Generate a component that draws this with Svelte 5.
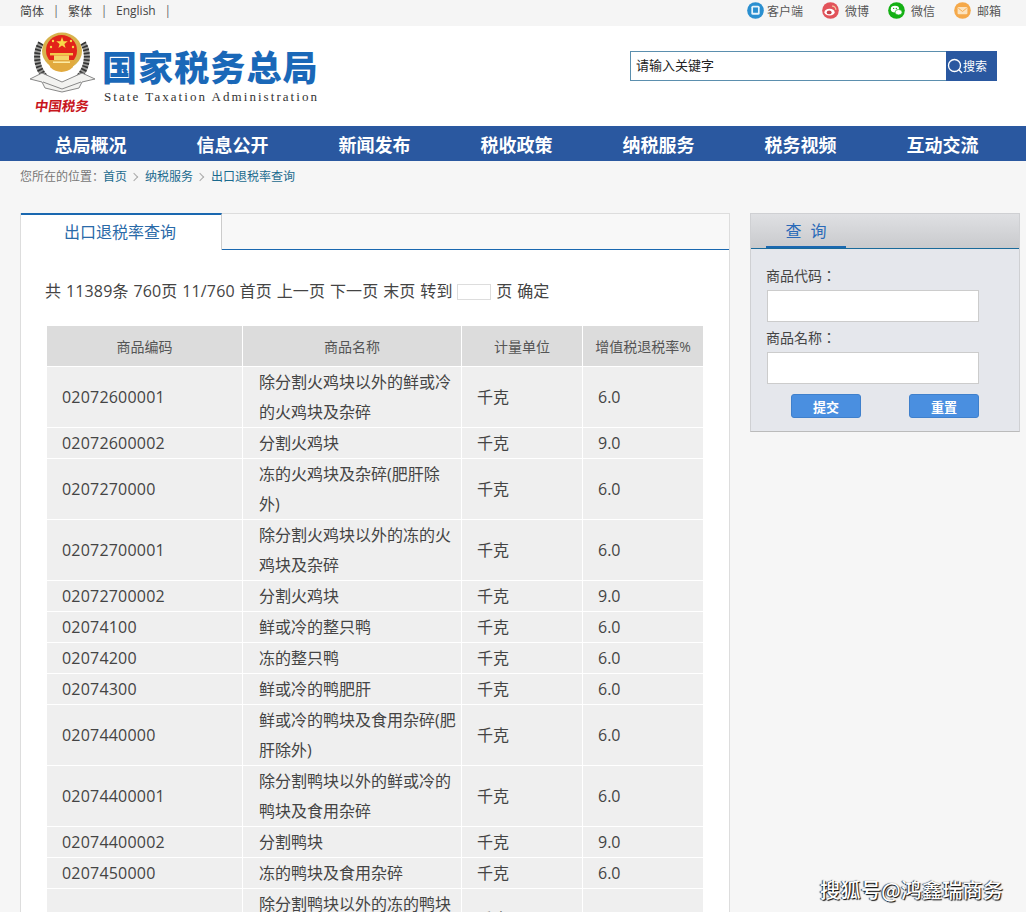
<script>
  const cols = ['商品编码', '商品名称', '计量单位', '增值税退税率%'];
  const rows = [
    ['02072600001', '除分割火鸡块以外的鲜或冷的火鸡块及杂碎', '6.0'],
    ['02072600002', '分割火鸡块', '9.0'],
    ['0207270000', '冻的火鸡块及杂碎(肥肝除外)', '6.0'],
    ['02072700001', '除分割火鸡块以外的冻的火鸡块及杂碎', '6.0'],
    ['02072700002', '分割火鸡块', '9.0'],
    ['02074100', '鲜或冷的整只鸭', '6.0'],
    ['02074200', '冻的整只鸭', '6.0'],
    ['02074300', '鲜或冷的鸭肥肝', '6.0'],
    ['0207440000', '鲜或冷的鸭块及食用杂碎(肥肝除外)', '6.0'],
    ['02074400001', '除分割鸭块以外的鲜或冷的鸭块及食用杂碎', '6.0'],
    ['02074400002', '分割鸭块', '9.0'],
    ['0207450000', '冻的鸭块及食用杂碎', '6.0'],
    ['02074500001', '除分割鸭块以外的冻的鸭块及食用杂碎', '6.0']
  ];
  const nav = ['总局概况', '信息公开', '新闻发布', '税收政策', '纳税服务', '税务视频', '互动交流'];
</script>

<div class="page">
  <div class="topbar">
    <div class="langs">
      <span>简体</span><i>|</i><span>繁体</span><i>|</i><span>English</span><i>|</i>
    </div>
    <div class="links">
      <span class="link first">
        <svg viewBox="0 0 18 18" width="17" height="17"><circle cx="9" cy="9" r="8.8" fill="#2a8fd0"/><rect x="4.6" y="4" width="8.8" height="9.6" rx="1.6" fill="#e8f4fb"/><rect x="6.4" y="5.8" width="5.2" height="5.6" fill="#2a8fd0"/></svg>
        客户端
      </span>
      <span class="link">
        <svg viewBox="0 0 18 18" width="17" height="17"><circle cx="9" cy="9" r="8.8" fill="#e2535a"/><ellipse cx="8" cy="10.8" rx="5.4" ry="3.6" fill="#fff"/><ellipse cx="7.6" cy="11" rx="2.6" ry="2" fill="#c9424a"/><path d="M10.6 4.4a3.6 3.6 0 0 1 4 4" fill="none" stroke="#f7c9a0" stroke-width="1.3"/></svg>
        微博
      </span>
      <span class="link">
        <svg viewBox="0 0 18 18" width="17" height="17"><circle cx="9" cy="9" r="8.8" fill="#14b014"/><ellipse cx="7.4" cy="7.6" rx="4.4" ry="3.5" fill="#fff"/><ellipse cx="11.2" cy="10.8" rx="3.7" ry="2.9" fill="#fff" stroke="#14b014" stroke-width=".7"/><circle cx="6" cy="6.8" r=".7" fill="#14b014"/><circle cx="8.8" cy="6.8" r=".7" fill="#14b014"/></svg>
        微信
      </span>
      <span class="link">
        <svg viewBox="0 0 18 18" width="17" height="17"><circle cx="9" cy="9" r="8.8" fill="#f5a94a"/><rect x="3.8" y="5.4" width="10.4" height="7.6" rx="1.2" fill="#fbe3bf"/><path d="M4.6 6.6 9 10l4.4-3.4" fill="none" stroke="#f5a94a" stroke-width="1"/></svg>
        邮箱
      </span>
    </div>
  </div>

  <header class="header">
    <div class="logo">
      <div class="emblem">
        <svg viewBox="0 0 66 62" width="66" height="62">
          <path d="M12 11C5 22 7 40 22 50" fill="none" stroke="#9a9a98" stroke-width="6"/>
          <path d="M54 11C61 22 59 40 44 50" fill="none" stroke="#9a9a98" stroke-width="6"/>
          <path d="M12 11C5 22 7 40 22 50" fill="none" stroke="#333" stroke-width="6" stroke-dasharray="1.6 1.8"/>
          <path d="M54 11C61 22 59 40 44 50" fill="none" stroke="#333" stroke-width="6" stroke-dasharray="1.6 1.8"/>
          <path d="M1 47 13 41 33 50 53 41 66 47 53 50 50 56 33 60 16 56 13 50Z" fill="#f2f2f0" stroke="#888" stroke-width="1"/>
          <path d="M14 50 33 57 52 50" fill="none" stroke="#888" stroke-width="1"/>
          <ellipse cx="33" cy="19" rx="20" ry="18.5" fill="#d8b24c"/>
          <circle cx="32.5" cy="18.5" r="15.5" fill="#e2231a"/>
          <path d="M18 28h29l-3.5 7.5a16 16 0 0 1-22 0Z" fill="#e2aa3e"/>
          <rect x="21" y="21" width="23" height="2.4" fill="#f2c84a"/>
          <rect x="25" y="23.4" width="15" height="4.6" fill="#f4d468"/>
          <rect x="24" y="29.5" width="17" height="1.4" fill="#fff2b0"/>
          <polygon points="33,5 34.5,9.2 38.8,9.2 35.4,11.9 36.6,16 33,13.6 29.4,16 30.6,11.9 27.2,9.2 31.5,9.2" fill="#f8d848"/>
          <circle cx="24" cy="9" r="1.2" fill="#f8d848"/><circle cx="42" cy="9" r="1.2" fill="#f8d848"/>
          <circle cx="22" cy="15" r="1.2" fill="#f8d848"/><circle cx="44" cy="15" r="1.2" fill="#f8d848"/>
        </svg>
        <span class="seal">中国税务</span>
      </div>
      <div class="brand">
        <div class="brand-cn">国家税务总局</div>
        <div class="brand-en">State Taxation Administration</div>
      </div>
    </div>
    <div class="search">
      <div class="search-input">请输入关键字</div>
      <div class="search-btn">
        <svg viewBox="0 0 16 16" width="16" height="16"><circle cx="7.5" cy="7.5" r="6" fill="none" stroke="#fff" stroke-width="1.3"/><path d="M11.8 11.8 15 15" stroke="#fff" stroke-width="1.3"/></svg>
        <span>搜索</span>
      </div>
    </div>
  </header>

  <nav class="nav">
    {#each nav as n}<a href="#top">{n}</a>{/each}
  </nav>

  <div class="crumbs">
    <span class="here">您所在的位置：</span><b>首页</b><em></em><b>纳税服务</b><em></em><b>出口退税率查询</b>
  </div>

  <div class="content">
    <main class="panel">
      <div class="tabs">
        <div class="tab">出口退税率查询</div>
        <div class="tab-rest"></div>
      </div>
      <div class="pager">
        共 11389条 760页 11/760 首页 上一页 下一页 末页 转到 <span class="jump"></span> 页 确定
      </div>
      <table>
        <thead>
          <tr>{#each cols as c}<th>{c}</th>{/each}</tr>
        </thead>
        <tbody>
          {#each rows as r}
            <tr>
              <td>{r[0]}</td>
              <td>{r[1]}</td>
              <td>千克</td>
              <td>{r[2]}</td>
            </tr>
          {/each}
        </tbody>
      </table>
    </main>

    <aside class="side">
      <div class="side-head"><span>查 询</span></div>
      <div class="side-body">
        <div class="lbl">商品代码：</div>
        <div class="field"></div>
        <div class="lbl second">商品名称：</div>
        <div class="field"></div>
        <div class="btns">
          <button>提交</button>
          <button>重置</button>
        </div>
      </div>
    </aside>
  </div>

  <div class="mark">搜狐号@鸿鑫瑞商务</div>
</div>

<style>
  :global(html), :global(body) { margin: 0; overflow: hidden; }
  .page {
    position: relative;
    width: 1026px;
    height: 912px;
    overflow: hidden;
    background: #f6f6f6;
    color: #444;
    font-family: "Open Sans", "Noto Sans CJK SC", sans-serif;
  }
  .topbar {
    height: 26px;
    display: flex;
    justify-content: space-between;
    align-items: center;
    padding: 0 25px 5px 20px;
    box-sizing: border-box;
    background: #f5f5f5;
    font-size: 12px;
    color: #444;
  }
  .langs { display: flex; align-items: center; }
  .langs i { font-style: normal; width: 24px; text-align: center; color: #666; }
  .links { display: flex; align-items: center; gap: 19px; }
  .link { display: flex; align-items: center; gap: 6px; color: #555; }
  .link.first { gap: 3px; }
  .header {
    height: 100px;
    background: #fff;
    display: flex;
    justify-content: space-between;
    padding: 0 29px 0 29px;
  }
  .logo { display: flex; }
  .emblem { width: 66px; display: flex; flex-direction: column; align-items: center; padding-top: 6px; }
  .seal {
    font-family: "Noto Sans CJK SC", sans-serif;
    font-size: 13.5px;
    line-height: 20px;
    margin-top: 1px;
    font-weight: 700;
    color: #c8161d;
    white-space: nowrap;
    transform: skewX(-8deg);
  }
  .brand { margin-left: 8px; padding-top: 18px; }
  .brand-cn {
    font-family: "Noto Sans CJK SC", sans-serif;
    font-size: 35px;
    font-weight: 900;
    line-height: 44px;
    margin-left: -1px;
    color: #1a68b8;
    letter-spacing: 1.1px;
    white-space: nowrap;
  }
  .brand-en {
    font-family: "Liberation Serif", serif;
    font-size: 13px;
    line-height: 16px;
    letter-spacing: 2.05px;
    color: #333;
    margin: 1px 0 0 1px;
    white-space: nowrap;
  }
  .search { display: flex; height: 30px; margin-top: 25px; width: 367px; }
  .search-input {
    flex: 1;
    box-sizing: border-box;
    border: 1px solid #5b8fae;
    border-right: none;
    background: #fff;
    font-size: 13px;
    line-height: 26px;
    padding-left: 5px;
    color: #222;
  }
  .search-btn {
    width: 51px;
    background: #2a58a0;
    color: #fff;
    font-size: 12px;
    display: flex;
    align-items: center;
    padding-left: 1px;
    box-sizing: border-box;
  }
  .nav {
    height: 35px;
    background: #2a58a0;
    display: flex;
    padding-left: 19.5px;
  }
  .nav a {
    width: 142px;
    flex: none;
    text-align: center;
    color: #fff;
    font-family: "Noto Sans CJK SC", sans-serif;
    font-size: 18px;
    font-weight: 700;
    line-height: 37px;
    text-decoration: none;
  }
  .crumbs {
    height: 52px;
    box-sizing: border-box;
    padding: 6px 0 0 20px;
    font-size: 12px;
    line-height: 20px;
    color: #777;
    display: flex;
    align-items: flex-start;
  }
  .here { margin-right: -1px; }
  .crumbs b { font-weight: 400; color: #1a6a8e; }
  .crumbs em {
    width: 5px; height: 5px; margin: 7px 8px 0 4px;
    border-top: 1px solid #aaa; border-right: 1px solid #aaa;
    transform: rotate(45deg);
  }
  .content {
    display: flex;
    align-items: flex-start;
    padding-left: 20px;
    gap: 20px;
  }
  .panel {
    width: 710px;
    box-sizing: border-box;
    background: #fff;
    border-left: 1px solid #ddd;
    border-right: 1px solid #ddd;
    flex: none;
  }
  .tabs { display: flex; height: 37px; box-sizing: border-box; }
  .tab {
    width: 201px;
    box-sizing: border-box;
    border-top: 2px solid #1a68b0;
    border-right: 1px solid #ccc;
    padding-left: 43px;
    font-size: 16px;
    line-height: 34px;
    color: #2a6aa8;
    background: #fff;
  }
  .tab-rest {
    flex: 1;
    background: #f8f8f8;
    border-top: 1px solid #ddd;
    border-bottom: 1px solid #1a68b0;
  }
  .pager {
    margin: 30px 0 0 24px;
    height: 46px;
    font-size: 16px;
    line-height: 22px;
    letter-spacing: 0.15px;
    word-spacing: 0.5px;
    color: #444;
    white-space: nowrap;
  }
  .jump {
    display: inline-block;
    width: 32px;
    height: 14px;
    border: 1px solid #ddd;
    vertical-align: -3px;
    background: #fff;
  }
  table {
    margin-left: 26px;
    width: 656px;
    table-layout: fixed;
    border-collapse: separate;
    border-spacing: 0;
  }
  th, td { box-sizing: border-box; }
  th:nth-child(1), td:nth-child(1) { width: 196px; }
  th:nth-child(2), td:nth-child(2) { width: 219px; }
  th:nth-child(3), td:nth-child(3) { width: 121px; }
  th {
    height: 41px;
    padding: 0;
    background: #dcdcdc;
    font-size: 14px;
    font-weight: 400;
    color: #555;
    border-right: 1px solid #fff;
    border-bottom: 1px solid #fff;
  }
  th:last-child, td:last-child { border-right: none; }
  td {
    background: #efefef;
    font-size: 16px;
    line-height: 30px;
    padding: 0 4px 0 15px;
    color: #444;
    border-right: 1px solid #fff;
    border-bottom: 1px solid #fff;
  }
  td:nth-child(1) { letter-spacing: 0.2px; }
  td:nth-child(2) { padding-left: 16px; }
  .side {
    width: 270px;
    flex: none;
    box-sizing: border-box;
    background: #e5e7ec;
    border: 1px solid #cfd0d3;
    border-bottom-color: #bbb;
  }
  .side-head {
    height: 35px;
    box-sizing: border-box;
    background: linear-gradient(#dfe0e3, #c9cacd);
    border-bottom: 1px solid #1a6a9a;
    padding-left: 15px;
  }
  .side-head span {
    display: block;
    width: 80px;
    height: 34px;
    box-sizing: border-box;
    border-bottom: 2px solid #1a68b0;
    text-align: center;
    font-size: 16px;
    line-height: 34px;
    color: #2a6ab8;
    word-spacing: 5px;
  }
  .side-body { padding: 17px 0 13px 16px; }
  .lbl {
    font-family: "Open Sans", "Noto Sans CJK TC", sans-serif;
    font-size: 14px;
    line-height: 20px;
    margin-left: -1px;
    color: #444;
  }
  .lbl.second { margin-top: 6px; }
  .field {
    width: 212px;
    height: 32px;
    box-sizing: border-box;
    margin-top: 4px;
    background: #fff;
    border: 1px solid #ccc;
  }
  .btns { display: flex; gap: 48px; margin: 10px 0 0 24px; }
  button {
    width: 70px;
    height: 24px;
    padding: 0;
    background: #4a8fe0;
    color: #fff;
    border: 1px solid #3f80cc;
    border-radius: 3px;
    font-family: inherit;
    font-size: 13px;
    font-weight: 700;
  }
  .mark {
    position: absolute;
    left: 820px;
    top: 876px;
    font-family: "Noto Sans CJK SC", sans-serif;
    font-size: 20px;
    font-weight: 500;
    line-height: 28px;
    letter-spacing: 0.45px;
    color: #fff;
    white-space: nowrap;
    text-shadow: 1px 1px 1px #000, -1px 0 1px #333;
  }
</style>
